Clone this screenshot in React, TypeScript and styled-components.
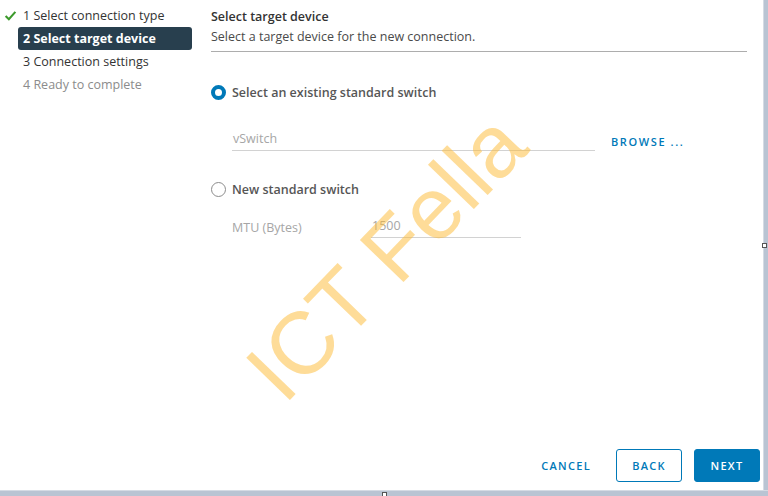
import React from "react";
import styled, { createGlobalStyle } from "styled-components";

const Global = createGlobalStyle`
  html, body { margin: 0; padding: 0; background: #fff; }
  body { font-family: "Open Sans", "Noto Sans", sans-serif; }
  * { box-sizing: border-box; }
`;

const Frame = styled.div`
  width: 768px;
  height: 496px;
  display: flex;
  flex-direction: column;
  overflow: hidden;
  position: relative;
`;

const Upper = styled.div`
  flex: 1;
  display: flex;
  min-height: 0;
`;

const Main = styled.div`
  flex: 1;
  display: flex;
  background: #fff;
`;

const VBar = styled.div`
  width: 5px;
  background: #b9c4d3;
  border-left: 1px solid #d5dbe4;
  display: flex;
  align-items: center;
`;

const HBar = styled.div`
  height: 6px;
  background: #b9c4d3;
  border-top: 1px solid #d5dbe4;
  display: flex;
  justify-content: center;
`;

const Handle = styled.span<{ $v?: boolean }>`
  width: 5px;
  height: 5px;
  border: 1px solid #555;
  background: #fff;
  margin-top: ${(p) => (p.$v ? "0" : "1px")};
  margin-left: ${(p) => (p.$v ? "-2px" : "0")};
`;

const Sidebar = styled.nav`
  width: 211px;
  padding: 4px 0 0 0;
  display: flex;
  flex-direction: column;
`;

const Step = styled.div<{ $state: "done" | "active" | "todo" | "disabled" }>`
  display: flex;
  align-items: center;
  height: 23px;
  margin-left: ${(p) => (p.$state === "done" ? "4px" : "18px")};
  width: ${(p) => (p.$state === "done" ? "188px" : "174px")};
  padding-left: ${(p) => (p.$state === "done" ? "0" : "5px")};
  border-radius: 3px;
  font-size: 12.5px;
  font-weight: ${(p) => (p.$state === "active" ? 700 : 500)};
  color: ${(p) =>
    p.$state === "active" ? "#fff" : p.$state === "disabled" ? "#8c8c8c" : "#333"};
  background: ${(p) => (p.$state === "active" ? "#283f4e" : "transparent")};
  white-space: nowrap;
`;

const Check = styled.svg`
  width: 13px;
  height: 13px;
  margin-right: 6px;
`;

const Content = styled.section`
  flex: 1;
  display: flex;
  flex-direction: column;
  padding: 9px 16px 8px 0;
`;

const Header = styled.header`
  border-bottom: 1px solid #adadad;
  padding-bottom: 6px;
  display: flex;
  flex-direction: column;
  gap: 4px;
`;

const Title = styled.h2`
  margin: 0;
  font-size: 12.5px;
  font-weight: 600;
  color: #333;
  line-height: 16px;
`;

const Subtitle = styled.p`
  margin: 0;
  font-size: 12.5px;
  color: #4a4a4a;
  line-height: 16px;
`;

const Form = styled.div`
  display: flex;
  flex-direction: column;
  padding-top: 31px;
`;

const RadioRow = styled.label`
  display: flex;
  align-items: center;
  gap: 6px;
  font-size: 12.5px;
  font-weight: 600;
  color: #565656;
  height: 18px;
`;

const RadioDot = styled.span<{ $on?: boolean }>`
  width: 15px;
  height: 15px;
  border-radius: 50%;
  border: ${(p) => (p.$on ? "4.5px solid #0079b8" : "1px solid #8c8c8c")};
  background: #fff;
  flex: none;
`;

const FieldRow = styled.div<{ $top: number; $bottom: number }>`
  display: flex;
  align-items: flex-end;
  margin: ${(p) => p.$top}px 0 ${(p) => p.$bottom}px 21px;
`;

const Input = styled.div<{ $w: number }>`
  width: ${(p) => p.$w}px;
  height: 24px;
  border-bottom: 1px solid #d2d2d2;
  font-size: 12.5px;
  color: #a6a6a6;
  padding: 0 0 3px 1px;
  display: flex;
  align-items: flex-end;
`;

const FieldLabel = styled.span`
  width: 139px;
  font-size: 12.5px;
  color: #a6a6a6;
  padding-bottom: 2px;
`;

const LinkButton = styled.button`
  border: none;
  background: none;
  padding: 0;
  margin: 0 0 2px 16px;
  font-family: inherit;
  font-size: 11px;
  font-weight: 600;
  letter-spacing: 1.6px;
  color: #0079b8;
`;

const Spacer = styled.div`
  flex: 1;
`;

const Footer = styled.footer`
  display: flex;
  justify-content: flex-end;
  align-items: center;
  gap: 12px;
  margin-right: -13px;
`;

const Btn = styled.button<{ $kind: "flat" | "outline" | "primary" }>`
  height: 33px;
  min-width: ${(p) => (p.$kind === "flat" ? "0" : "66px")};
  padding: 0 12px;
  border-radius: 3px;
  font-family: inherit;
  font-size: 11px;
  font-weight: 600;
  letter-spacing: 1.3px;
  border: 1px solid ${(p) => (p.$kind === "flat" ? "transparent" : "#0079b8")};
  background: ${(p) => (p.$kind === "primary" ? "#0079b8" : "#fff")};
  color: ${(p) => (p.$kind === "primary" ? "#fff" : "#0079b8")};
`;

const Watermark = styled.div`
  position: absolute;
  left: 386px;
  top: 257px;
  transform: translate(-50%, -50%) rotate(-46deg);
  font-family: "Liberation Sans", Arial, sans-serif;
  font-size: 88px;
  color: rgba(253, 186, 50, 0.5);
  white-space: nowrap;
  pointer-events: none;
  line-height: 1;
`;

export default function App() {
  return (
    <>
      <Global />
      <Frame>
        <Upper>
          <Main>
            <Sidebar>
              <Step $state="done">
                <Check viewBox="0 0 16 16">
                  <path d="M2 8.5 L6 12.5 L14 3.5" fill="none" stroke="#3c9a2c" strokeWidth="2.6" />
                </Check>
                1 Select connection type
              </Step>
              <Step $state="active">2 Select target device</Step>
              <Step $state="todo">3 Connection settings</Step>
              <Step $state="disabled">4 Ready to complete</Step>
            </Sidebar>
            <Content>
              <Header>
                <Title>Select target device</Title>
                <Subtitle>Select a target device for the new connection.</Subtitle>
              </Header>
              <Form>
                <RadioRow>
                  <RadioDot $on />
                  Select an existing standard switch
                </RadioRow>
                <FieldRow $top={26} $bottom={29}>
                  <Input $w={363}>vSwitch</Input>
                  <LinkButton>BROWSE ...</LinkButton>
                </FieldRow>
                <RadioRow>
                  <RadioDot />
                  New standard switch
                </RadioRow>
                <FieldRow $top={16} $bottom={0}>
                  <FieldLabel>MTU (Bytes)</FieldLabel>
                  <Input $w={150}>1500</Input>
                </FieldRow>
              </Form>
              <Spacer />
              <Footer>
                <Btn $kind="flat">CANCEL</Btn>
                <Btn $kind="outline">BACK</Btn>
                <Btn $kind="primary">NEXT</Btn>
              </Footer>
            </Content>
          </Main>
          <VBar>
            <Handle $v />
          </VBar>
        </Upper>
        <HBar>
          <Handle />
        </HBar>
        <Watermark>ICT Fella</Watermark>
      </Frame>
    </>
  );
}
